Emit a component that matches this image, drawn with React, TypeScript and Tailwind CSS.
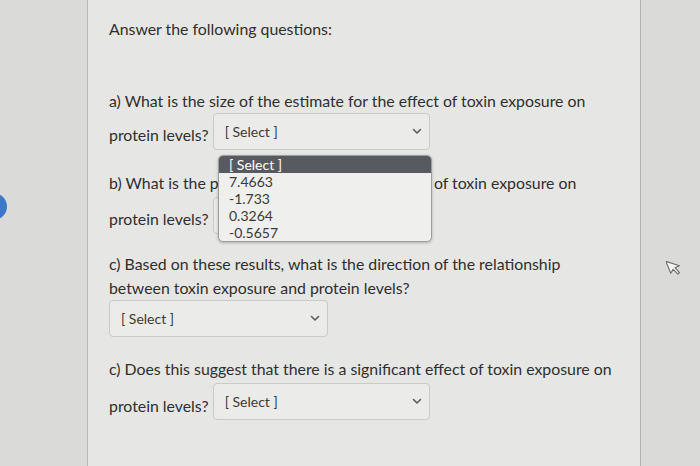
import React from 'react';

const Chevron = () => (
  <svg width="10" height="7" viewBox="0 0 10 7" fill="none" stroke="#5b5b5b" strokeWidth="1.6" strokeLinecap="round" strokeLinejoin="round">
    <path d="M1.5 1.5 L5 5 L8.5 1.5" />
  </svg>
);

const SelectBox = ({ className = '' }: { className?: string }) => (
  <div className={`flex h-[37px] w-[217px] shrink-0 items-center justify-between rounded-[4px] border border-[#cacac8] bg-[#ebebe9] pl-[11px] pr-[7px] text-[14px] text-[#3a3a3a] ${className}`}>
    <span>[ Select ]</span>
    <Chevron />
  </div>
);

const options = ['7.4663', '-1.733', '0.3264', '-0.5657'];

export default function App() {
  return (
    <div className="relative flex h-[466px] w-[700px] overflow-hidden bg-[#dadad8] font-[Lato,sans-serif] text-[15.85px] leading-[24px] text-[#2f2f2f]">
      {/* left gutter with the blue tab peeking in */}
      <div className="relative w-[88px] shrink-0 border-r border-[#b9b9b7]">
        <div className="absolute left-[-20px] top-[193px] h-[27px] w-[27px] rounded-full bg-[#3d78c8]" />
      </div>

      {/* question panel */}
      <div className="w-[553px] shrink-0 border-r border-[#b4b4b2] bg-[#e6e6e4] pl-[21px] pt-[17px]">
        <p>Answer the following questions:</p>

        <div className="mt-[48px]">
          <p>a) What is the size of the estimate for the effect of toxin exposure on</p>
          <div className="flex items-center gap-1">
            <span className="pt-[7px]">protein levels?</span>
            <SelectBox />
          </div>
        </div>

        <div className="mt-[21px]">
          <p className="whitespace-nowrap">
            b) What is the <span className="tracking-[-0.25px]">p-value associated with an effect</span> of toxin exposure on
          </p>
          <div className="mt-[2px] flex items-center gap-1">
            <span className="pt-[7px]">protein levels?</span>
            <SelectBox />
          </div>
        </div>

        <div className="mt-[18px]">
          <p>c) Based on these results, what is the direction of the relationship</p>
          <p>between toxin exposure and protein levels?</p>
          <SelectBox className="w-[219px]" />
        </div>

        <div className="mt-[20px]">
          <p>c) Does this suggest that there is a significant effect of toxin exposure on</p>
          <div className="mt-[2px] flex items-center gap-1">
            <span className="pt-[9px]">protein levels?</span>
            <SelectBox className="w-[216px]" />
          </div>
        </div>
      </div>

      <div className="flex-1" />

      {/* open dropdown list of question b */}
      <div className="absolute left-[218px] top-[155px] w-[214px] overflow-hidden rounded-[5px] border border-[#9d9d9b] bg-[#efefed] text-[14px] leading-[17px] text-[#3a3a3a] shadow-[0_1px_3px_rgba(0,0,0,0.25)]">
        <div className="bg-[#575b5f] pl-[10px] text-white">[ Select ]</div>
        {options.map((o) => (
          <div key={o} className="pl-[10px]">{o}</div>
        ))}
      </div>

      {/* mouse pointer */}
      <svg className="absolute left-[666px] top-[257px]" width="16" height="20" viewBox="0 0 16 20">
        <path d="M2 2 L3 15 L6.5 12 L9.5 18 L11.5 17 L8.8 11 L13.5 10.5 Z" fill="#f4f4f2" stroke="#6a6a6a" strokeWidth="1.1" strokeLinejoin="round" transform="rotate(-18 8 10)" />
      </svg>
    </div>
  );
}
